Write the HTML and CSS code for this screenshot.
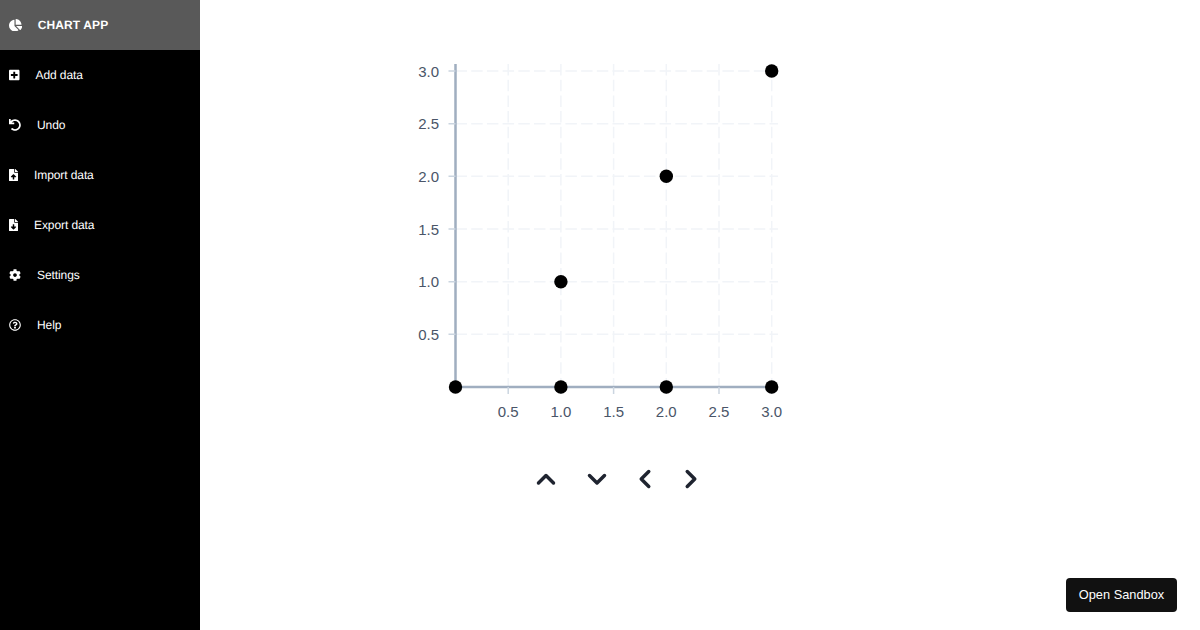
FILE: index.html
```html
<!DOCTYPE html>
<html lang="en">
  <head>
    <meta charset="UTF-8" />
    <meta name="viewport" content="width=device-width, initial-scale=1.0" />
    <title>Chart App</title>
    <link rel="stylesheet" href="styles.css">
  </head>

  <body>
    <div class="sidebar">
      <div class="item title">
        <svg class="icon" viewBox="0 0 544 512"><path d="M527.79 288H290.5l158.03 158.03c6.04 6.04 15.98 6.53 22.19.68 38.7-36.46 65.32-85.61 73.13-140.86 1.34-9.46-6.51-17.85-16.06-17.85zm-15.83-64.8C503.72 103.74 408.26 8.28 288.8.04 279.68-.59 272 7.1 272 16.24V240h223.77c9.14 0 16.82-7.68 16.19-16.8zM224 288V50.71c0-9.55-8.39-17.4-17.84-16.06C86.99 51.49-4.1 155.6.14 280.37 4.5 408.51 114.83 513.59 243.03 511.98c50.4-.63 96.97-16.87 135.26-44.03 7.9-5.6 8.42-17.23 1.57-24.08L224 288z"/></svg>
        <span>CHART APP</span>
      </div>
      <div class="item">
        <svg class="icon" viewBox="0 0 448 512"><path d="M400 32H48C21.5 32 0 53.5 0 80v352c0 26.5 21.5 48 48 48h352c26.5 0 48-21.5 48-48V80c0-26.5-21.5-48-48-48zm-32 252c0 6.6-5.4 12-12 12h-92v92c0 6.6-5.4 12-12 12h-56c-6.6 0-12-5.4-12-12v-92H92c-6.6 0-12-5.4-12-12v-56c0-6.6 5.4-12 12-12h92v-92c0-6.6 5.4-12 12-12h56c6.6 0 12 5.4 12 12v92h92c6.6 0 12 5.4 12 12v56z"/></svg>
        <span>Add data</span>
      </div>
      <div class="item">
        <svg class="icon" viewBox="0 0 512 512"><path d="M212.333 224.333H12c-6.627 0-12-5.373-12-12V12C0 5.373 5.373 0 12 0h48c6.627 0 12 5.373 12 12v78.112C117.773 39.279 184.26 7.47 258.175 8.007c136.906.994 246.448 111.623 246.157 248.532C504.041 393.258 393.12 504 256.333 504c-64.089 0-122.496-24.313-166.51-64.215-5.099-4.622-5.334-12.554-.467-17.42l33.967-33.967c4.474-4.474 11.662-4.717 16.401-.525C170.76 415.336 211.58 432 256.333 432c97.268 0 176-78.716 176-176 0-97.267-78.716-176-176-176-58.496 0-110.28 28.476-142.274 72.333h98.274c6.627 0 12 5.373 12 12v48c0 6.627-5.373 12-12 12z"/></svg>
        <span>Undo</span>
      </div>
      <div class="item">
        <svg class="icon" viewBox="0 0 384 512"><path d="M224 136V0H24C10.7 0 0 10.7 0 24v464c0 13.3 10.7 24 24 24h336c13.3 0 24-10.7 24-24V160H248c-13.2 0-24-10.8-24-24zm65.18 216.01H224v80c0 8.84-7.16 16-16 16h-32c-8.84 0-16-7.16-16-16v-80H94.82c-14.28 0-21.41-17.29-11.27-27.36l96.42-95.7c6.65-6.61 17.39-6.61 24.04 0l96.42 95.7c10.15 10.07 3.03 27.36-11.25 27.36zM377 105L279.1 7c-4.5-4.5-10.6-7-17-7H256v128h128v-6.1c0-6.3-2.5-12.4-7-16.9z"/></svg>
        <span>Import data</span>
      </div>
      <div class="item">
        <svg class="icon" viewBox="0 0 384 512"><path d="M224 136V0H24C10.7 0 0 10.7 0 24v464c0 13.3 10.7 24 24 24h336c13.3 0 24-10.7 24-24V160H248c-13.2 0-24-10.8-24-24zm76.45 211.36l-96.42 95.7c-6.65 6.61-17.39 6.61-24.04 0l-96.42-95.7C73.42 337.29 80.54 320 94.82 320H160v-80c0-8.84 7.16-16 16-16h32c8.84 0 16 7.16 16 16v80h65.18c14.28 0 21.4 17.29 11.27 27.36zM377 105L279.1 7c-4.5-4.5-10.6-7-17-7H256v128h128v-6.1c0-6.3-2.5-12.4-7-16.9z"/></svg>
        <span>Export data</span>
      </div>
      <div class="item">
        <svg class="icon" viewBox="0 0 512 512"><path d="M487.4 315.7l-42.6-24.6c4.3-23.2 4.3-47 0-70.2l42.6-24.6c4.9-2.8 7.1-8.6 5.5-14-11.1-35.6-30-67.8-54.7-94.6-3.8-4.1-10-5.1-14.8-2.3L380.8 110c-17.9-15.4-38.5-27.3-60.8-35.1V25.8c0-5.6-3.9-10.5-9.4-11.7-36.7-8.2-74.3-7.8-109.2 0-5.5 1.2-9.4 6.1-9.4 11.7V75c-22.2 7.9-42.8 19.8-60.8 35.1L88.7 85.5c-4.9-2.8-11-1.9-14.8 2.3-24.7 26.7-43.6 58.9-54.7 94.6-1.7 5.4.6 11.2 5.5 14L67.3 221c-4.3 23.2-4.3 47 0 70.2l-42.6 24.6c-4.9 2.8-7.1 8.6-5.5 14 11.1 35.6 30 67.8 54.7 94.6 3.8 4.1 10 5.1 14.8 2.3l42.6-24.6c17.9 15.4 38.5 27.3 60.8 35.1v49.2c0 5.6 3.9 10.5 9.4 11.7 36.7 8.2 74.3 7.8 109.2 0 5.5-1.2 9.4-6.1 9.4-11.7v-49.2c22.2-7.9 42.8-19.8 60.8-35.1l42.6 24.6c4.9 2.8 11 1.9 14.8-2.3 24.7-26.7 43.6-58.9 54.7-94.6 1.5-5.5-.7-11.3-5.6-14.1zM256 336c-44.1 0-80-35.9-80-80s35.9-80 80-80 80 35.9 80 80-35.9 80-80 80z"/></svg>
        <span>Settings</span>
      </div>
      <div class="item">
        <svg class="icon" viewBox="0 0 512 512"><path d="M256 8C119.043 8 8 119.083 8 256c0 136.997 111.043 248 248 248s248-111.003 248-248C504 119.083 392.957 8 256 8zm0 448c-110.532 0-200-89.431-200-200 0-110.495 89.472-200 200-200 110.491 0 200 89.471 200 200 0 110.53-89.431 200-200 200zm107.244-255.2c0 67.052-72.421 68.084-72.421 92.863V300c0 6.627-5.373 12-12 12h-45.647c-6.627 0-12-5.373-12-12v-8.659c0-35.745 27.1-50.034 47.579-61.516 17.561-9.845 28.324-16.541 28.324-29.579 0-17.246-21.999-28.693-39.784-28.693-23.189 0-33.894 10.977-48.942 29.969-4.057 5.12-11.46 6.071-16.666 2.124l-27.824-21.098c-5.107-3.872-6.251-11.066-2.644-16.363C184.846 131.491 214.94 112 261.794 112c49.071 0 101.45 38.304 101.45 88.8zM298 368c0 23.159-18.841 42-42 42s-42-18.841-42-42 18.841-42 42-42 42 18.841 42 42z"/></svg>
        <span>Help</span>
      </div>
    </div>

    <div class="main">
      <svg class="chart" viewBox="400 40 400 400">
        <g class="grid">
          <path d="M455.5 71H778M455.5 123.7H778M455.5 176.3H778M455.5 229H778M455.5 281.7H778M455.5 334.3H778" />
          <path d="M508.2 64V387M560.9 64V387M613.6 64V387M666.3 64V387M719 64V387M771.7 64V387" />
        </g>
        <g class="axis">
          <path d="M455.5 64V387H778" />
          <path class="tick" d="M448.5 71H455.5M448.5 123.7H455.5M448.5 176.3H455.5M448.5 229H455.5M448.5 281.7H455.5M448.5 334.3H455.5" />
          <path class="tick" d="M508.2 387V394M560.9 387V394M613.6 387V394M666.3 387V394M719 387V394M771.7 387V394" />
        </g>
        <g class="labels">
          <text x="439" y="76.5">3.0</text>
          <text x="439" y="129">2.5</text>
          <text x="439" y="181.8">2.0</text>
          <text x="439" y="234.5">1.5</text>
          <text x="439" y="287">1.0</text>
          <text x="439" y="339.8">0.5</text>
        </g>
        <g class="labels center">
          <text x="508.2" y="417">0.5</text>
          <text x="560.9" y="417">1.0</text>
          <text x="613.6" y="417">1.5</text>
          <text x="666.3" y="417">2.0</text>
          <text x="719" y="417">2.5</text>
          <text x="771.7" y="417">3.0</text>
        </g>
        <g class="points">
          <circle cx="455.5" cy="387" r="6.7" />
          <circle cx="560.9" cy="387" r="6.7" />
          <circle cx="666.3" cy="387" r="6.7" />
          <circle cx="771.7" cy="387" r="6.7" />
          <circle cx="560.9" cy="281.7" r="6.7" />
          <circle cx="666.3" cy="176.3" r="6.7" />
          <circle cx="771.7" cy="71" r="6.7" />
        </g>
      </svg>

      <div class="controls">
        <svg class="arrow" viewBox="0 0 24 24"><path d="M4.5 16l7.5-7.5 7.5 7.5" /></svg>
        <svg class="arrow" viewBox="0 0 24 24"><path d="M4.5 8.5l7.5 7.5 7.5-7.5" /></svg>
        <svg class="arrow side" viewBox="0 0 24 24"><path d="M15.75 4.5l-7.5 7.5 7.5 7.5" /></svg>
        <svg class="arrow side" viewBox="0 0 24 24"><path d="M8.25 4.5l7.5 7.5-7.5 7.5" /></svg>
      </div>
    </div>

    <button class="sandbox">Open Sandbox</button>
  </body>
</html>
```

FILE: styles.css
```css
body {
  margin: 0;
  height: 630px;
  display: flex;
  overflow: hidden;
  background-color: white;
  font-family: "Liberation Sans", Arial, sans-serif;
}

.sidebar {
  width: 200px;
  height: 100%;
  flex-shrink: 0;
  background-color: black;
  color: white;
  font-size: 12px;
  letter-spacing: -0.09px;
  text-rendering: geometricPrecision;
}

.item {
  display: flex;
  align-items: center;
  height: 50px;
  padding-left: 9px;
}

.title {
  background-color: #595959;
  font-weight: bold;
  letter-spacing: 0.1px;
}

.title .icon {
  height: 12.5px;
  margin-left: -0.5px;
  margin-right: 16px;
}

.icon {
  height: 12px;
  margin-right: 16px;
  fill: white;
}

.main {
  padding: 40px 0 0 200px;
}

.chart {
  display: block;
  width: 400px;
  height: 400px;
  opacity: 0.999;
}

.grid path {
  fill: none;
  stroke: #f1f4f8;
  stroke-width: 1.5;
  stroke-dasharray: 11.5 4.2;
}

.axis path {
  fill: none;
  stroke: #a0aec0;
  stroke-width: 2.5;
}

.axis .tick {
  stroke: #cbd5e0;
  stroke-width: 1.5;
}

.labels text {
  font-size: 15px;
  fill: #4a5568;
  text-anchor: end;
}

.labels.center text {
  text-anchor: middle;
}

.points circle {
  fill: black;
}

.controls {
  display: flex;
  align-items: center;
  gap: 27.5px;
  height: 36px;
  margin-top: 20.5px;
  padding-left: 133.5px;
}

.arrow {
  width: 24px;
  height: 24px;
  fill: none;
  stroke: #1f2430;
  stroke-width: 3.5;
  stroke-linecap: round;
  stroke-linejoin: round;
}

.arrow.side {
  margin-left: -3.5px;
}

.arrow.side:last-child {
  margin-left: -5.5px;
}

.sandbox {
  position: absolute;
  right: 23px;
  bottom: 18px;
  width: 111px;
  height: 34px;
  padding: 0 0 1px;
  border: none;
  border-radius: 4px;
  background-color: #111;
  color: white;
  font-family: "Liberation Sans", Arial, sans-serif;
  font-size: 12.8px;
}
```
